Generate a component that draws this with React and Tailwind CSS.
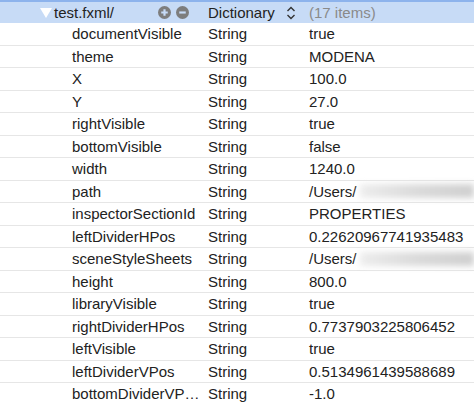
import React from 'react';

const rows = [
  ['documentVisible', 'true'],
  ['theme', 'MODENA'],
  ['X', '100.0'],
  ['Y', '27.0'],
  ['rightVisible', 'true'],
  ['bottomVisible', 'false'],
  ['width', '1240.0'],
  ['path', '/Users/', true],
  ['inspectorSectionId', 'PROPERTIES'],
  ['leftDividerHPos', '0.22620967741935483'],
  ['sceneStyleSheets', '/Users/', true],
  ['height', '800.0'],
  ['libraryVisible', 'true'],
  ['rightDividerHPos', '0.7737903225806452'],
  ['leftVisible', 'true'],
  ['leftDividerVPos', '0.5134961439588689'],
  ['bottomDividerVP…', '-1.0'],
];

function Blur() {
  return (
    <span className="ml-[3px] flex-1 h-[14px] blur-[3px] bg-gradient-to-r from-[#ededed] via-[#dadada] to-[#cfcfcf]" />
  );
}

export default function App() {
  return (
    <div className="w-[474px] h-[402px] overflow-hidden bg-white text-[15px] text-[#222] leading-none" style={{ fontFamily: '"Liberation Sans", Arial, sans-serif' }}>
      <div className="h-[23px] bg-[#c7dbf6] border-t-2 border-[#8db3ec] grid grid-cols-[208px_101px_1fr] items-center">
        <div className="flex items-center">
          <svg width="12" height="10" viewBox="0 0 12 10" className="ml-[40px] mr-[2px]">
            <path d="M0 0 H12 L6 10 Z" fill="#fff" />
          </svg>
          <span>test.fxml/</span>
          <div className="ml-auto mr-[19px] flex gap-[5px]">
            <svg width="13" height="13" viewBox="0 0 12 12">
              <circle cx="6" cy="6" r="6" fill="#7d7d7d" />
              <path d="M3 6 H9 M6 3 V9" stroke="#c7dbf6" strokeWidth="2" />
            </svg>
            <svg width="13" height="13" viewBox="0 0 12 12">
              <circle cx="6" cy="6" r="6" fill="#7d7d7d" />
              <path d="M3 6 H9" stroke="#c7dbf6" strokeWidth="2" />
            </svg>
          </div>
        </div>
        <div className="flex items-center">
          <span>Dictionary</span>
          <svg width="10" height="14" viewBox="0 0 10 14" className="ml-auto mr-[13px]">
            <path d="M1.5 5 L5 1.5 L8.5 5 M1.5 9 L5 12.5 L8.5 9" stroke="#333" strokeWidth="1.4" fill="none" />
          </svg>
        </div>
        <div className="text-[#8a8a8a]">(17 items)</div>
      </div>
      {rows.map(([k, v, blur]) => (
        <div key={k} className="h-[22.5px] border-b border-[#e6e6e6] grid grid-cols-[208px_101px_1fr] items-center">
          <div className="pl-[72px] whitespace-nowrap">{k}</div>
          <div>String</div>
          <div className="flex items-center">
            <span>{v}</span>
            {blur && <Blur />}
          </div>
        </div>
      ))}
    </div>
  );
}
